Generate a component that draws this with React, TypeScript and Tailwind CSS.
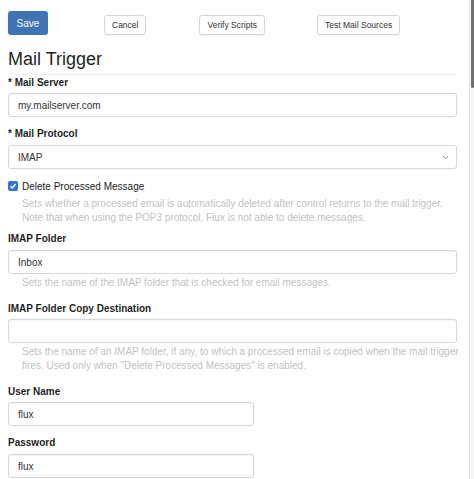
import { ReactNode } from "react";

function Label({ children, className = "" }: { children: ReactNode; className?: string }) {
  return (
    <div className={`text-[10px] leading-[14px] font-bold text-[#1f1f1f] ${className}`}>
      {children}
    </div>
  );
}

function Help({ children, className = "" }: { children: ReactNode; className?: string }) {
  return (
    <div className={`pl-[14px] text-[10px] leading-[14px] text-[#c2c2c2] whitespace-nowrap ${className}`}>
      {children}
    </div>
  );
}

function TextBox({ value, className = "" }: { value: string; className?: string }) {
  return (
    <div
      className={`h-[24px] flex items-center px-[9px] border border-[#d6d6d6] rounded-[3px] bg-white text-[10px] text-[#333] shadow-[inset_0_1px_1px_rgba(0,0,0,0.04)] ${className}`}
    >
      {value}
    </div>
  );
}

function Btn({ children }: { children: ReactNode }) {
  return (
    <button className="h-[20px] px-[7px] border border-[#d4d4d4] rounded-[3px] bg-white text-[8.5px] text-[#333] shadow-[0_1px_1px_rgba(0,0,0,0.05)]">
      {children}
    </button>
  );
}

export default function App() {
  return (
    <div
      className="flex w-[474px] h-[479px] overflow-hidden bg-white"
      style={{ fontFamily: '"Liberation Sans", Arial, sans-serif' }}
    >
      <div className="w-[469px] pl-[8px] pr-[12px]">
        {/* toolbar */}
        <div className="flex items-center pt-[11px]">
          <button className="h-[24px] w-[40px] rounded-[3px] bg-[#3e74b6] text-white text-[10px]">
            Save
          </button>
          <div className="ml-[56px]">
            <Btn>Cancel</Btn>
          </div>
          <div className="ml-[53px]">
            <Btn>Verify Scripts</Btn>
          </div>
          <div className="ml-[52px]">
            <Btn>Test Mail Sources</Btn>
          </div>
        </div>

        <h1 className="mt-[13px] pb-[4px] border-b border-[#eeeeee] text-[18px] leading-[22px] text-[#1f1f1f]">
          Mail Trigger
        </h1>

        <Label className="mt-[1px]">* Mail Server</Label>
        <TextBox value="my.mailserver.com" className="mt-[3px]" />

        <Label className="mt-[10px]">* Mail Protocol</Label>
        <div className="mt-[4px] h-[24px] flex items-center justify-between px-[9px] border border-[#d6d6d6] rounded-[3px] bg-white text-[10px] text-[#333]">
          <span>IMAP</span>
          <svg width="7" height="5" viewBox="0 0 7 5" className="mr-[-2px]">
            <path d="M0.8 1 L3.5 3.8 L6.2 1" fill="none" stroke="#888" strokeWidth="1" />
          </svg>
        </div>

        <div className="mt-[10px] flex items-center h-[14px]">
          <div className="w-[10px] h-[10px] rounded-[2px] bg-[#2f74e0] flex items-center justify-center">
            <svg width="8" height="8" viewBox="0 0 8 8">
              <path d="M1.5 4.2 L3.3 6 L6.6 2" fill="none" stroke="white" strokeWidth="1.5" />
            </svg>
          </div>
          <span className="ml-[4px] text-[10px] text-[#222]">Delete Processed Message</span>
        </div>
        <Help className="mt-[4px]">
          Sets whether a processed email is automatically deleted after control returns to the mail trigger.
          <br />
          Note that when using the POP3 protocol, Flux is not able to delete messages.
        </Help>

        <Label className="mt-[7px]">IMAP Folder</Label>
        <TextBox value="Inbox" className="mt-[4px]" />
        <Help className="mt-[2px]">Sets the name of the IMAP folder that is checked for email messages.</Help>

        <Label className="mt-[12px]">IMAP Folder Copy Destination</Label>
        <TextBox value="" className="mt-[3px]" />
        <Help className="mt-[2px]">
          Sets the name of an IMAP folder, if any, to which a processed email is copied when the mail trigger
          <br />
          fires. Used only when "Delete Processed Messages" is enabled.
        </Help>

        <Label className="mt-[12px]">User Name</Label>
        <TextBox value="flux" className="mt-[3px] w-[246px]" />

        <Label className="mt-[10px]">Password</Label>
        <TextBox value="flux" className="mt-[4px] w-[246px]" />
      </div>

      {/* scrollbar */}
      <div className="w-[5px] h-full border-l border-[#e3e3e3] bg-[#f7f7f7] pl-[1px]">
        <div className="w-[3px] h-[88px] rounded-b-[2px] bg-[#6f6f6f]" />
      </div>
    </div>
  );
}
